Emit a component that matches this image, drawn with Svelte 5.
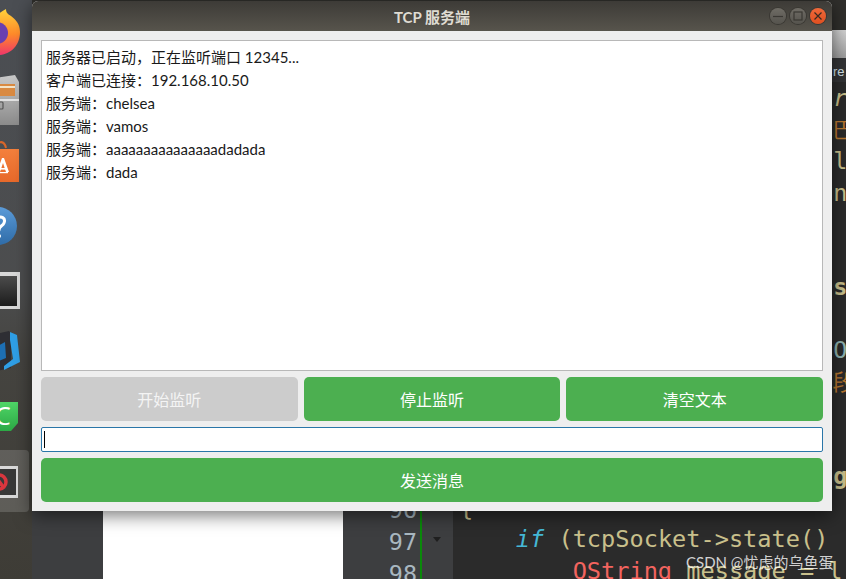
<script>
  const logLines = [
    '服务器已启动，正在监听端口 12345...',
    '客户端已连接：192.168.10.50',
    '服务端：chelsea',
    '服务端：vamos',
    '服务端：aaaaaaaaaaaaaaadadada',
    '服务端：dada'
  ]

  // behind the window only the last column or so of these lines shows
  const pad = ' '.repeat(27)
  const codeLines = [
    { text: pad + 'r', cls: 'olive italic' },
    { text: pad + '巴', cls: 'orange' },
    { text: pad + 'l', cls: 'olive' },
    { text: pad + 'n', cls: 'olive' },
    { text: '' },
    { text: '' },
    { text: pad + 's', cls: 'olive bold' },
    { text: '' },
    { text: pad + 'O', cls: 'teal' },
    { text: pad + '段', cls: 'orange' },
    { text: '' },
    { text: '' },
    { text: pad + 'g', cls: 'olive bold' }
  ]
</script>

<div class="desktop">
  <svg class="dock" width="32" height="579" viewBox="0 0 32 579">
    <defs>
      <linearGradient id="dockBg" x1="0" y1="0" x2="0" y2="1">
        <stop offset="0" stop-color="#4b4e53" />
        <stop offset="0.5" stop-color="#4c4d4e" />
        <stop offset="0.62" stop-color="#454440" />
        <stop offset="1" stop-color="#3e3c36" />
      </linearGradient>
      <linearGradient id="fox" x1="0" y1="0" x2="0" y2="1">
        <stop offset="0" stop-color="#ffd23a" />
        <stop offset="0.55" stop-color="#ff8a2a" />
        <stop offset="1" stop-color="#f0366a" />
      </linearGradient>
      <linearGradient id="cabinet" x1="0" y1="0" x2="0" y2="1">
        <stop offset="0" stop-color="#c9c9c9" />
        <stop offset="1" stop-color="#8b8b8b" />
      </linearGradient>
      <linearGradient id="bag" x1="0" y1="0" x2="0" y2="1">
        <stop offset="0" stop-color="#f4803c" />
        <stop offset="1" stop-color="#e7692b" />
      </linearGradient>
      <linearGradient id="help" x1="0" y1="0" x2="0" y2="1">
        <stop offset="0" stop-color="#5b9bd8" />
        <stop offset="1" stop-color="#2f6ca8" />
      </linearGradient>
      <linearGradient id="term" x1="0" y1="0" x2="0" y2="1">
        <stop offset="0" stop-color="#4c4c4c" />
        <stop offset="1" stop-color="#1c1c1c" />
      </linearGradient>
      <linearGradient id="qt" x1="0" y1="0" x2="0" y2="1">
        <stop offset="0" stop-color="#4fd567" />
        <stop offset="1" stop-color="#2ca945" />
      </linearGradient>
    </defs>
    <rect width="32" height="579" fill="url(#dockBg)" />

    <!-- firefox -->
    <path d="M-8 30 C-8 18 0 12 6 9 C6 13 8 14 11 16 C16 20 20 24 20 32 C20 46 10 55 -2 55 C-10 55 -16 50 -18 44 Z" fill="url(#fox)" />
    <circle cx="-3" cy="33" r="11" fill="#6a3fb0" />

    <!-- file cabinet -->
    <path d="M-12 79 L15 75 L19 82 L19 125 L-12 125 Z" fill="url(#cabinet)" />
    <rect x="-8" y="84" width="23" height="12" fill="#d98a42" />
    <rect x="-8" y="86" width="23" height="2" fill="#f3e3c7" />
    <rect x="-12" y="99" width="31" height="2" fill="#e2e2e2" />
    <rect x="-6" y="102" width="9" height="7" rx="1" fill="none" stroke="#555" stroke-width="1.2" />

    <!-- software bag -->
    <path d="M-12 149 L19 149 L19 182 L-12 182 Z" fill="url(#bag)" />
    <path d="M-4 150 C-4 141 4 139 6 148" fill="none" stroke="#d9662a" stroke-width="2" />
    <path d="M-3 172 L2 158 L4 158 L9 172 L6 172 L3 163 L0 172 Z" fill="#fff" />
    <rect x="0" y="168" width="7" height="1.6" fill="#fff" />
    <rect x="-3" y="172" width="11" height="1.2" fill="#fff" />

    <!-- help -->
    <circle cx="-2" cy="226" r="19" fill="url(#help)" />
    <path d="M-3 219 C1 215 6 218 4 223 C3 226 -1 226 -1 230" fill="none" stroke="#fff" stroke-width="3" stroke-linecap="round" />
    <circle cx="-1" cy="236" r="2" fill="#fff" />

    <!-- terminal -->
    <rect x="-14" y="272" width="34" height="37" fill="#d8d8d8" />
    <rect x="-12" y="276" width="29" height="30" fill="url(#term)" />

    <!-- vs code style icon -->
    <path d="M-8 335 L9 331 L11 333 L11 368 L-8 372 Z" fill="#2e2e33" />
    <path d="M10 332 L17 335 L20 362 L4 370 L4 366 L13 359 L10 340 Z" fill="#2f9fe6" />
    <path d="M-4 347 L5 342 L6 358 L-4 362 Z" fill="#1d6fb4" />

    <!-- qt creator -->
    <path d="M-10 402 L18 402 L18 423 L11 431 L-10 431 Z" fill="url(#qt)" />
    <text x="-5" y="425" class="qt-letter">C</text>

    <!-- running app, highlighted -->
    <rect x="-10" y="450" width="39" height="62" rx="4" fill="#ffffff" fill-opacity="0.16" />
    <rect x="-6" y="466" width="24" height="32" fill="#d9d9d9" />
    <rect x="-4" y="469" width="20" height="26" fill="#383838" />
    <circle cx="-1" cy="482" r="7" fill="none" stroke="#d9363e" stroke-width="3.5" />
    <path d="M-5 476 L4 488" stroke="#d9363e" stroke-width="3.5" />
  </svg>

  <div class="side-panel"></div>
  <div class="white-panel"></div>

  <div class="editor">
    <div class="topbar"></div>
    <div class="tabs"></div>
    <div class="tab-strip"><span>re</span></div>
    <div class="editor-body">
      <div class="gutter">
        <div class="num">96</div>
        <div class="num">97</div>
        <div class="num">98</div>
      </div>
      <div class="fold"><span class="caret"></span></div>
      <div class="code">
        {#each codeLines as line}
          <div class="line {line.cls ?? ''}">{line.text}</div>
        {/each}
        <div class="line full olive">{'{'}</div>
        <div class="line full indent1"><span class="cyan italic">if</span> <span class="olive">(tcpSocket-&gt;state()</span></div>
        <div class="line full indent2"><span class="red">QString</span> <span class="olive">message = l</span></div>
      </div>
    </div>
  </div>

  <div class="window">
    <div class="titlebar">
      <span class="title">TCP 服务端</span>
      <div class="controls">
        <span class="ctl">
          <svg width="10" height="10" viewBox="0 0 10 10"><path d="M0 5.5 H10" stroke="#3a3833" stroke-width="1.2" /></svg>
        </span>
        <span class="ctl">
          <svg width="10" height="10" viewBox="0 0 10 10"><rect x="1" y="1" width="8" height="8" fill="none" stroke="#3a3833" stroke-width="1.2" /></svg>
        </span>
        <span class="ctl close">
          <svg width="10" height="10" viewBox="0 0 10 10"><path d="M1.5 1.5 L8.5 8.5 M8.5 1.5 L1.5 8.5" stroke="#3a2a20" stroke-width="1.2" /></svg>
        </span>
      </div>
    </div>
    <div class="content">
      <div class="log">
        {#each logLines as line}
          <div>{line}</div>
        {/each}
      </div>
      <div class="buttons">
        <button class="btn" disabled>开始监听</button>
        <button class="btn">停止监听</button>
        <button class="btn">清空文本</button>
      </div>
      <div class="input"><span class="cursor"></span></div>
      <button class="btn">发送消息</button>
    </div>
  </div>

  <span class="watermark">CSDN @忧虑的乌鱼蛋</span>
</div>

<style>
  :global(body) {
    margin: 0;
  }
  .desktop {
    position: relative;
    width: 846px;
    height: 579px;
    overflow: hidden;
    background: #302f2c;
    font-family: Lato, "Noto Sans CJK SC", sans-serif;
  }
  .dock {
    position: absolute;
    left: 0;
    top: 0;
  }
  .qt-letter {
    font-family: "Open Sans", sans-serif;
    font-size: 25px;
    fill: #fff;
  }
  .side-panel {
    position: absolute;
    left: 32px;
    top: 100px;
    width: 71px;
    height: 479px;
    background: #3d3e40;
  }
  .white-panel {
    position: absolute;
    left: 103px;
    top: 100px;
    width: 240px;
    height: 479px;
    background: #fff;
  }
  .editor {
    position: absolute;
    left: 343px;
    top: 0;
    width: 503px;
    height: 579px;
    display: flex;
    flex-direction: column;
    background: #2b2b2b;
  }
  .topbar {
    height: 30px;
    background: #302f2c;
  }
  .tabs {
    height: 28px;
    background: linear-gradient(#d2d2d2, #9d9d9d);
  }
  .tab-strip {
    height: 24px;
    background: #333436;
    color: #d5e4ee;
    font: 13px "Liberation Sans", sans-serif;
    line-height: 28px;
    padding-left: 490px;
    overflow: hidden;
  }
  .editor-body {
    flex: 1;
    display: flex;
    min-height: 0;
  }
  .gutter {
    width: 77px;
    background: #3d3e40;
    border-right: 2px solid #0a8a0a;
    display: flex;
    flex-direction: column;
    justify-content: flex-end;
    color: #a9b7c0;
    font: 23.4px/32px "DejaVu Sans Mono", monospace;
    text-align: right;
  }
  .num {
    padding-right: 3px;
  }
  .gutter .num:last-child {
    margin-bottom: -11px;
  }
  .fold {
    width: 31px;
    background: #3d3e40;
    position: relative;
  }
  .caret {
    position: absolute;
    left: 11px;
    top: 455px;
    border: 4px solid transparent;
    border-top: 5px solid #1f1f1f;
  }
  .code {
    flex: 1;
    padding-top: 1px;
    overflow: hidden;
    font: 23.4px/31.5px "DejaVu Sans Mono", monospace;
    color: #c9c08c;
  }
  .line {
    height: 31.5px;
    white-space: pre;
  }
  .line.full {
    padding-left: 6px;
    font-size: 23.6px;
  }
  .line.indent1 {
    padding-left: calc(6px + 4ch);
  }
  .line.indent2 {
    padding-left: calc(6px + 8ch);
  }
  .olive {
    color: #c9c08c;
  }
  .orange {
    color: #b8772f;
  }
  .teal {
    color: #8fb3b0;
  }
  .cyan {
    color: #45b8d6;
  }
  .red {
    color: #f2645f;
  }
  .italic {
    font-style: italic;
  }
  .bold {
    font-weight: bold;
  }
  .window {
    position: absolute;
    left: 32px;
    top: 1px;
    width: 800px;
    height: 510px;
    display: flex;
    flex-direction: column;
    background: #eeeeee;
    border-radius: 6px 6px 0 0;
    box-shadow: 0 4px 18px rgba(0, 0, 0, 0.55);
  }
  .titlebar {
    position: relative;
    flex: none;
    height: 30px;
    display: flex;
    align-items: center;
    justify-content: center;
    background: linear-gradient(#3d3b37, #57544c);
    border-radius: 6px 6px 0 0;
  }
  .title {
    color: #dfdbd2;
    font-size: 15px;
    font-weight: 700;
  }
  .controls {
    position: absolute;
    right: 6px;
    top: 7px;
    display: flex;
    gap: 4px;
  }
  .ctl {
    width: 16px;
    height: 16px;
    border-radius: 50%;
    display: flex;
    align-items: center;
    justify-content: center;
    background: linear-gradient(#6f6c65, #55534d);
    box-shadow: 0 0 0 1px #3a3833;
  }
  .ctl.close {
    background: linear-gradient(#f0693a, #df4f20);
  }
  .content {
    flex: 1;
    min-height: 0;
    display: flex;
    flex-direction: column;
    gap: 6px;
    padding: 9px;
  }
  .log {
    flex: 1;
    min-height: 0;
    box-sizing: border-box;
    background: #fff;
    border: 1px solid #b8b8b8;
    padding: 5px 4px;
    color: #1a1a1a;
    font-size: 15px;
    line-height: 23px;
  }
  .buttons {
    display: flex;
    gap: 6px;
  }
  .btn {
    flex: 1;
    height: 44px;
    flex-shrink: 0;
    border: none;
    border-radius: 5px;
    background: #4caf50;
    color: #fff;
    font: inherit;
    font-size: 16px;
    padding: 0;
  }
  .content > .btn {
    flex: none;
  }
  .btn:disabled {
    background: #cccccc;
    color: #f4f4f4;
  }
  .input {
    height: 25px;
    box-sizing: border-box;
    background: #fff;
    border: 1px solid #2a76a8;
    border-radius: 2px;
    padding: 3px 2px;
    display: flex;
  }
  .cursor {
    width: 1px;
    background: #000;
  }
  .watermark {
    position: absolute;
    left: 686px;
    top: 553px;
    color: rgba(255, 255, 255, 0.8);
    font-size: 15px;
    line-height: 18px;
    white-space: nowrap;
  }
</style>
